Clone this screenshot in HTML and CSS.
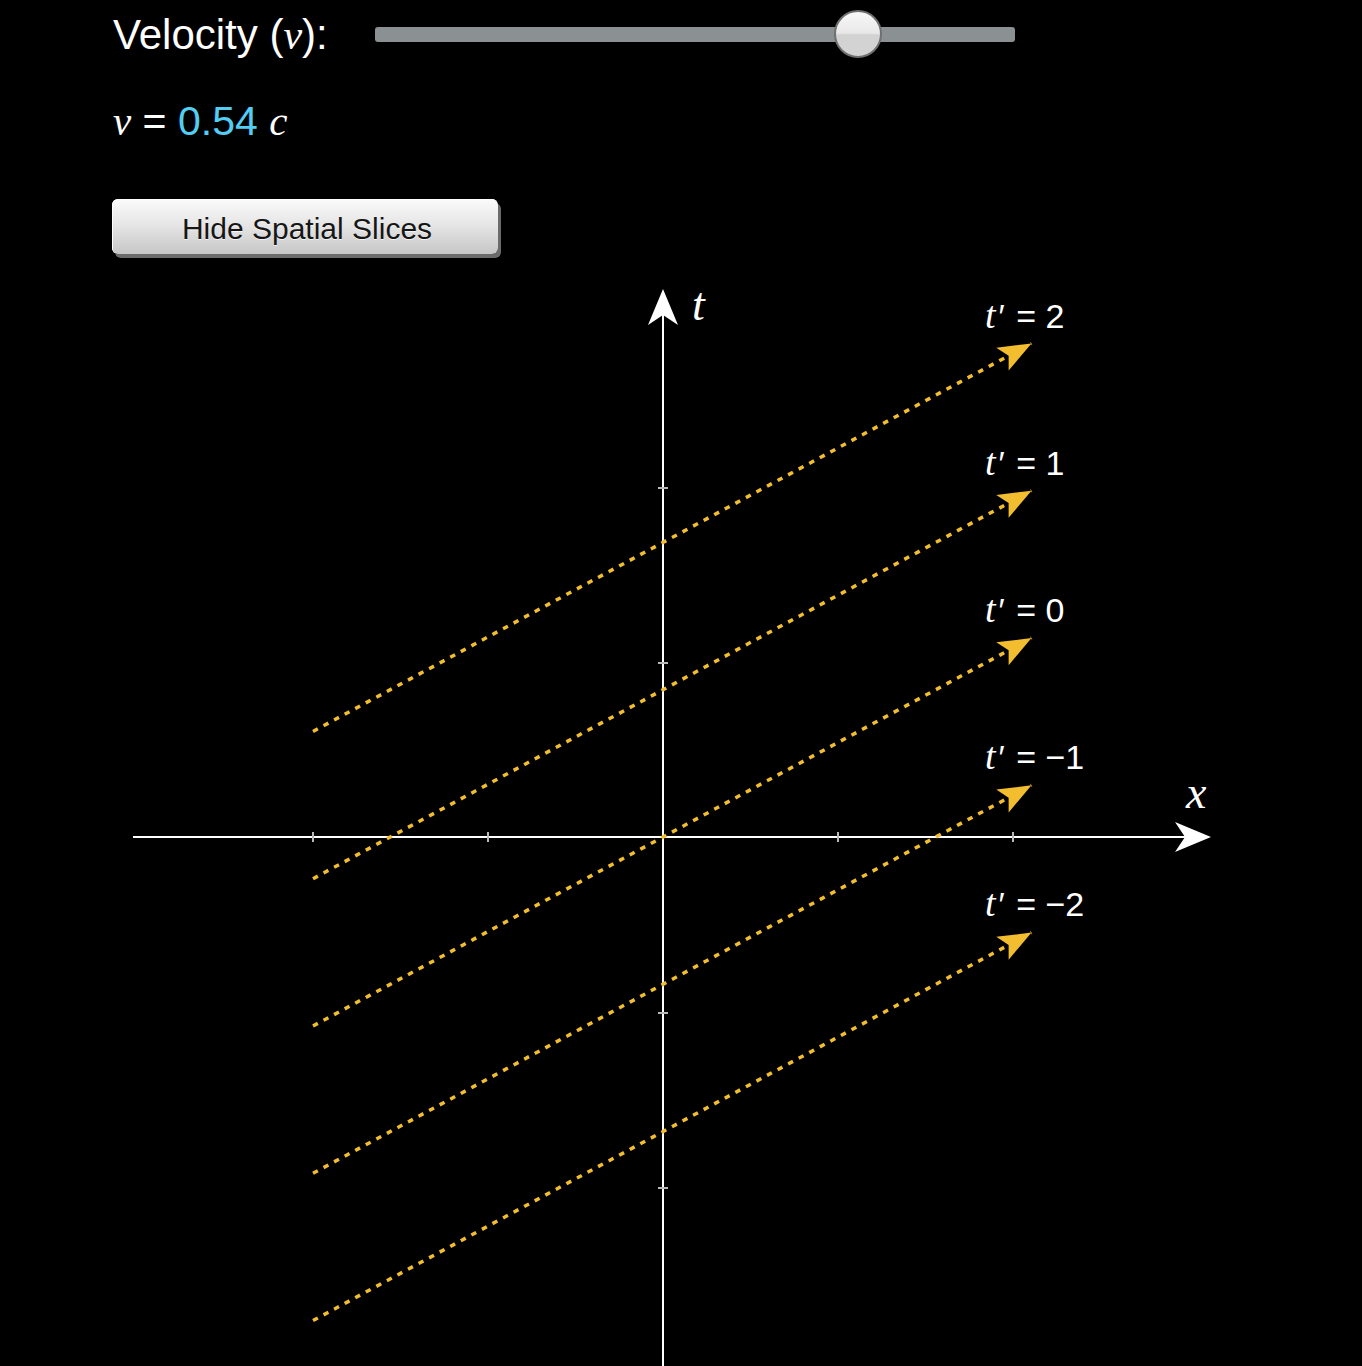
FILE: index.html
```html
<!DOCTYPE html>
<html lang="en">
<head>
<meta charset="utf-8">
<title>Spatial Slices</title>
<link rel="stylesheet" href="styles.css">
</head>
<body>
<div class="page">
  <div class="controls">
    <div class="velocity-row">
      <label class="label" for="vel">Velocity (<i class="math">v</i>):</label>
      <input type="range" id="vel" class="slider" min="-0.98" max="0.98" step="0.01" value="0.54">
    </div>
    <div class="value-row"><i class="math">v</i> = <span class="num">0.54</span> <i class="math">c</i></div>
    <button class="btn" type="button">Hide Spatial Slices</button>
  </div>
  <svg class="diagram" width="1362" height="1096" viewBox="0 270 1362 1096" xmlns="http://www.w3.org/2000/svg">
    <defs>
      <marker id="ah" markerUnits="userSpaceOnUse" markerWidth="36" markerHeight="30" viewBox="0 0 36 30" refX="34" refY="15" orient="auto">
        <path class="ahead" d="M34,15 L1,2 L8,15 L1,28 Z"/>
      </marker>
    </defs>
    <!-- axes -->
    <line class="axis" x1="133" y1="837" x2="1190" y2="837"/>
    <polygon class="axis-head" points="1211,837 1175,822 1185,837 1175,852"/>
    <line class="axis" x1="663" y1="1366" x2="663" y2="305"/>
    <polygon class="axis-head" points="663,289 648,325 663,315 678,325"/>
    <!-- ticks -->
    <line class="tick" x1="313" y1="832" x2="313" y2="842"/>
    <line class="tick" x1="488" y1="832" x2="488" y2="842"/>
    <line class="tick" x1="838" y1="832" x2="838" y2="842"/>
    <line class="tick" x1="1013" y1="832" x2="1013" y2="842"/>
    <line class="tick" x1="658" y1="488" x2="668" y2="488"/>
    <line class="tick" x1="658" y1="663" x2="668" y2="663"/>
    <line class="tick" x1="658" y1="1013" x2="668" y2="1013"/>
    <line class="tick" x1="658" y1="1188" x2="668" y2="1188"/>
    <!-- axis labels -->
    <text class="axis-lbl" x="1186" y="808">x</text>
    <text class="axis-lbl" x="692" y="320">t</text>
    <!-- spatial slices -->
    <line class="slice" x1="313" y1="731.42" x2="1031.5" y2="343.43" marker-end="url(#ah)"/>
    <line class="slice" x1="313" y1="878.71" x2="1031.5" y2="490.72" marker-end="url(#ah)"/>
    <line class="slice" x1="313" y1="1026" x2="1031.5" y2="638.01" marker-end="url(#ah)"/>
    <line class="slice" x1="313" y1="1173.29" x2="1031.5" y2="785.30" marker-end="url(#ah)"/>
    <line class="slice" x1="313" y1="1320.58" x2="1031.5" y2="932.59" marker-end="url(#ah)"/>
    <!-- slice labels -->
    <text class="slice-lbl" x="985" y="328"><tspan class="mi">t</tspan><tspan class="pr" dx="3">′</tspan><tspan dx="2"> = 2</tspan></text>
    <text class="slice-lbl" x="985" y="475"><tspan class="mi">t</tspan><tspan class="pr" dx="3">′</tspan><tspan dx="2"> = 1</tspan></text>
    <text class="slice-lbl" x="985" y="622"><tspan class="mi">t</tspan><tspan class="pr" dx="3">′</tspan><tspan dx="2"> = 0</tspan></text>
    <text class="slice-lbl" x="985" y="769"><tspan class="mi">t</tspan><tspan class="pr" dx="3">′</tspan><tspan dx="2"> = −1</tspan></text>
    <text class="slice-lbl" x="985" y="916"><tspan class="mi">t</tspan><tspan class="pr" dx="3">′</tspan><tspan dx="2"> = −2</tspan></text>
  </svg>
</div>
</body>
</html>
```
FILE: styles.css
```css
html, body {
  margin: 0;
  padding: 0;
  background: #000;
  overflow: hidden;
}

body {
  color: #fff;
  font-family: "Liberation Sans", Arial, Helvetica, sans-serif;
}

.page {
  width: 1362px;
  height: 1366px;
}

.controls {
  padding-left: 113px;
}

.velocity-row {
  display: flex;
  align-items: center;
  height: 68px;
}

.label {
  flex: 0 0 262px;
  font-size: 42px;
  line-height: 46px;
  padding-top: 2px;
}

.math {
  font-family: "Liberation Serif", "Times New Roman", serif;
  font-style: italic;
}

.slider {
  -webkit-appearance: none;
  appearance: none;
  width: 640px;
  height: 50px;
  margin: 0;
  padding: 0;
  background: transparent;
}

.slider::-webkit-slider-runnable-track {
  height: 15px;
  background: #8b9093;
  border-radius: 3px;
}

.slider::-webkit-slider-thumb {
  -webkit-appearance: none;
  appearance: none;
  width: 48px;
  height: 48px;
  margin-top: -16.5px;
  border-radius: 50%;
  border: 2px solid #6f6f6f;
  box-sizing: border-box;
  background: linear-gradient(#f8f8f8 0%, #e8e8e8 48%, #d2d2d2 52%, #d4d4d4 100%);
}

.value-row {
  margin-top: 30px;
  height: 46px;
  font-size: 41px;
  line-height: 46px;
}

.num {
  color: #52cdf3;
}

.btn {
  display: block;
  margin: 55px 0 0 -1px;
  width: 386px;
  height: 55px;
  padding: 4px 0 0 4px;
  border: none;
  border-radius: 6px;
  background: linear-gradient(#fbfbfb 0%, #e4e4e4 50%, #c6c6c6 100%);
  box-shadow: inset 1px 1px 0 #ffffff, 3px 4px 0 #6b6b6b;
  color: #161616;
  font-family: "Liberation Sans", Arial, Helvetica, sans-serif;
  font-size: 30px;
  text-shadow: 0 1px 0 rgba(255, 255, 255, 0.7);
  cursor: pointer;
}

.diagram {
  display: block;
  margin-top: 16px;
}

.axis {
  stroke: #ffffff;
  stroke-width: 2;
}

.axis-head {
  fill: #ffffff;
}

.tick {
  stroke: #b8b8b8;
  stroke-width: 2;
}

.slice {
  stroke: #f2bd2f;
  stroke-width: 3.5;
  stroke-dasharray: 5.5 6.5;
}

.ahead {
  fill: #f2bd2f;
}

.axis-lbl {
  fill: #ffffff;
  font-family: "Liberation Serif", "Times New Roman", serif;
  font-style: italic;
  font-size: 46px;
}

.slice-lbl {
  fill: #ffffff;
  font-family: "Liberation Sans", Arial, Helvetica, sans-serif;
  font-size: 34px;
}

.slice-lbl .mi {
  font-family: "Liberation Serif", "Times New Roman", serif;
  font-style: italic;
  font-size: 38px;
}

.slice-lbl .pr {
  font-family: "Liberation Sans", Arial, sans-serif;
  font-size: 33px;
}
```
